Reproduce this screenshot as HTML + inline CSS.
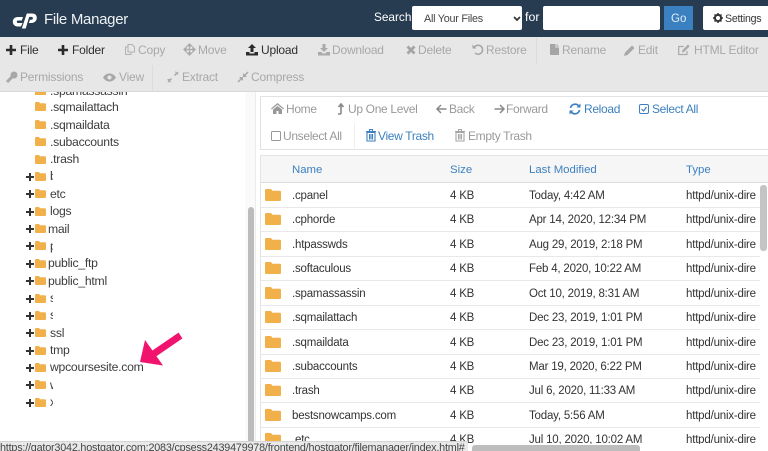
<!DOCTYPE html>
<html><head><meta charset="utf-8">
<style>
html,body{margin:0;padding:0}
body{width:768px;height:451px;overflow:hidden;background:#fff;position:relative;font-family:"Liberation Sans",sans-serif;font-size:12.5px;color:#333}
.a{position:absolute;white-space:nowrap;line-height:16px}
.b{position:absolute}
.g{color:#a8a8a8}.d{color:#2f2f2f}.l{color:#3c80bf}.h{color:#999}
.m{font-size:12px;letter-spacing:-.2px}
.n{font-size:12px;letter-spacing:-.33px}
.t{color:#3c3c3c;font-size:12.2px;letter-spacing:-.25px}
.r{color:#333;font-size:11.5px;letter-spacing:-.2px;margin-top:1px}
.c{font-size:11.4px;margin-top:1px}
.w{width:3px;overflow:hidden}
svg{position:absolute;overflow:visible}
</style></head><body>

<div class="b" style="left:0;top:0;width:768px;height:37px;background:#273b51"></div>
<div class="b" style="left:0;top:37px;width:768px;height:54px;background:#e7e7e7;border-bottom:1px solid #d8d8d8"></div>
<div class="b" style="left:152px;top:65px;width:1px;height:26px;background:#dcdcdc"></div>
<div class="b" style="left:536px;top:38px;width:1px;height:26px;background:#dcdcdc"></div>

<svg style="left:12px;top:12px" width="26" height="18" viewBox="0 0 26 18"><path d="M11 5H6C2.800 5 .8 7 .8 9.700S2.800 14.500 6 14.500h3l1.500-3.500H6.300C5.300 11 4.800 10.500 4.800 9.700S5.400 8.500 6.400 8.500h3.400z" fill="#fff"/><path d="M9.800 16.500 14.800 1.500h5.200c3 0 4.800 1.700 4.800 4.300 0 3-2.300 5.200-5.300 5.200h-2.700l1.200-3.300h1.300c1 0 1.600-.6 1.600-1.500 0-.8-.6-1.300-1.500-1.300h-2.200l-3.500 11.600z" fill="#fff"/></svg>
<div class="a" style="left:44px;top:11px;color:#eef1f4;font-size:15px;line-height:18px;letter-spacing:-.3px">File Manager</div>
<div class="a" style="left:374px;top:9px;color:#fff;font-size:11.800px">Search</div>
<div class="b" style="left:412px;top:6px;width:110px;height:24px;background:#fff;border-radius:2px"></div>
<div class="a" style="left:424px;top:11px;font-size:10.800px;letter-spacing:-.25px;color:#444">All Your Files</div>
<svg style="left:513px;top:16px" width="8" height="6"><path d="M1 1l3 3 3-3" fill="none" stroke="#333" stroke-width="1.700"/></svg>
<div class="a" style="left:525px;top:9px;color:#fff;font-size:12.400px">for</div>
<div class="b" style="left:543px;top:6px;width:117px;height:24px;background:#fff;border-radius:2px"></div>
<div class="b" style="left:664px;top:6px;width:29px;height:24px;background:#3b80c0"></div>
<div class="a" style="left:671px;top:11px;color:#e5eef7;font-size:11.500px">Go</div>
<div class="b" style="left:703px;top:6px;width:65px;height:24px;background:#fff;border-radius:2px 0 0 2px"></div>
<svg style="left:713px;top:13px" width="10" height="10" viewBox="0 0 10 10"><circle cx="5" cy="5" r="3.100" fill="none" stroke="#333" stroke-width="2"/><path d="M5 0v2M5 8v2M0 5h2M8 5h2M1.500 1.500l1.200 1.200M7.300 7.300l1.200 1.200M1.500 8.500l1.200-1.200M7.300 2.700l1.200-1.200" stroke="#333" stroke-width="1.500"/></svg>
<div class="a" style="left:725px;top:11px;font-size:10.600px;letter-spacing:-.25px;color:#333">Settings</div>

<svg style="left:6px;top:45px" width="10" height="10"><path d="M5 0v10M0 5h10" stroke="#2c2c2c" stroke-width="2.600"/></svg>
<div class="a d m" style="left:20px;top:42px">File</div>
<svg style="left:58px;top:45px" width="10" height="10"><path d="M5 0v10M0 5h10" stroke="#2c2c2c" stroke-width="2.600"/></svg>
<div class="a d m" style="left:72px;top:42px">Folder</div>
<svg style="left:125px;top:44px" width="10" height="11"><path d="M3 .5h4l2.500 2.500v5H3zM3 3H.5v7.500H6V8" fill="none" stroke="#b2b2b2"/></svg>
<div class="a g m" style="left:138px;top:42px">Copy</div>
<svg style="left:184px;top:44px" width="11" height="11"><path d="M5.500 0v11M0 5.500h11M5.500 0l-2 2h4zM5.500 11l-2-2h4zM0 5.500l2-2v4zM11 5.500l-2-2v4z" stroke="#aaa" fill="#aaa" stroke-width="1.300"/></svg>
<div class="a g m" style="left:198px;top:42px">Move</div>
<svg style="left:246px;top:44px" width="12" height="12"><path d="M6 0l4 4H7.500v4h-3V4H2z" fill="#2c2c2c"/><path d="M0 8h3.500v1.500h5V8H12v3.500H0z" fill="#2c2c2c"/></svg>
<div class="a d m" style="left:261px;top:42px">Upload</div>
<svg style="left:318px;top:44px" width="12" height="12"><path d="M4.500 0h3v4H10L6 8 2 4h2.500z" fill="#aaa"/><path d="M0 8h3.500l1 1.500h3l1-1.500H12v3.500H0z" fill="#aaa"/></svg>
<div class="a g m" style="left:332px;top:42px">Download</div>
<svg style="left:406px;top:45px" width="10" height="10"><path d="M1.500 1.500l7 7M8.500 1.500l-7 7" stroke="#a5a5a5" stroke-width="2.800"/></svg>
<div class="a g m" style="left:418px;top:42px">Delete</div>
<svg style="left:472px;top:44px" width="12" height="11" viewBox="0 0 12 11"><path d="M2.500 3A4.500 4.500 0 1 1 3 9" fill="none" stroke="#a5a5a5" stroke-width="1.500"/><path d="M.5.500v4h4z" fill="#a5a5a5"/></svg>
<div class="a g m" style="left:486px;top:42px">Restore</div>
<svg style="left:550px;top:44px" width="9" height="11"><path d="M0 0h5.500v3.500H9V11H0zM6.500 0L9 2.500H6.500z" fill="#a5a5a5"/></svg>
<div class="a g m" style="left:562px;top:42px">Rename</div>
<svg style="left:624px;top:45px" width="11" height="11"><path d="M0 11l1-3.500L8 .5l2.500 2.500-7 7z" fill="#a8a8a8"/></svg>
<div class="a g m" style="left:638px;top:42px">Edit</div>
<svg style="left:678px;top:44px" width="12" height="12"><path d="M9 7v3.500H.7V2.500h5" fill="none" stroke="#aaa" stroke-width="1.200"/><path d="M4 8.500l.5-2.500L10 .5 11.700 2.300 6.300 7.800z" fill="#aaa"/></svg>
<div class="a g m" style="left:694px;top:42px">HTML Editor</div>

<svg style="left:6px;top:71px" width="12" height="12"><circle cx="8" cy="4" r="3.500" fill="#a8a8a8"/><path d="M6 6L1 11" stroke="#a8a8a8" stroke-width="3"/></svg>
<div class="a g m" style="left:20px;top:69px">Permissions</div>
<svg style="left:103px;top:73px" width="13" height="9"><path d="M0 4.500C2 1.500 4 .5 6.500.5S11 1.500 13 4.500C11 7.500 9 8.500 6.500 8.500S2 7.500 0 4.500z" fill="#a8a8a8"/><circle cx="6.500" cy="4.500" r="2" fill="#e7e7e7"/></svg>
<div class="a g m" style="left:119px;top:69px">View</div>
<svg style="left:167px;top:71px" width="12" height="12"><path d="M1 11l3.500-3.500M7.500 4.500L11 1" stroke="#a8a8a8" stroke-width="1.500"/><path d="M0 8l4 4-1-4zM8 0l4 4-3-1z" fill="#a8a8a8"/></svg>
<div class="a g m" style="left:182px;top:69px">Extract</div>
<svg style="left:237px;top:71px" width="12" height="12"><path d="M1 11l3.500-3.500M7.500 4.500L11 1" stroke="#a8a8a8" stroke-width="1.500"/><path d="M6 6h-4l4 4zM6 6h4L6 2z" fill="#a8a8a8"/></svg>
<div class="a g m" style="left:251px;top:69px">Compress</div>

<!-- tree -->
<div class="a t" style="left:50px;top:83px;clip-path:inset(9px 0 0 0)">.spamassassin</div>
<svg style="left:35px;top:92px" width="11" height="3"><rect width="11" height="3" fill="#f2b04a"/></svg>

<svg width="0" height="0" style="position:absolute"><defs>
<symbol id="f" viewBox="0 0 11 9"><path d="M0 1.200Q0 0 1.200 0H4l1 1.300h4.800Q11 1.300 11 2.500V8Q11 9 10 9H1Q0 9 0 8z" fill="#f2b04a"/></symbol>
<symbol id="F" viewBox="0 0 16 12"><path d="M0 1Q0 0 1 0h5l1.500 1.800H15Q16 1.800 16 3v8q0 1-1 1H1q-1 0-1-1z" fill="#f2b04a"/></symbol>
<symbol id="p" viewBox="0 0 8 8"><path d="M4 0v8M0 4h8" stroke="#333" stroke-width="2"/></symbol>
</defs></svg>

<svg style="left:35px;top:102px" width="11" height="9"><use href="#f"/></svg><div class="a t" style="left:50px;top:99px">.sqmailattach</div>
<svg style="left:35px;top:120px" width="11" height="9"><use href="#f"/></svg><div class="a t" style="left:50px;top:117px">.sqmaildata</div>
<svg style="left:35px;top:137px" width="11" height="9"><use href="#f"/></svg><div class="a t" style="left:50px;top:134px">.subaccounts</div>
<svg style="left:35px;top:155px" width="11" height="9"><use href="#f"/></svg><div class="a t" style="left:50px;top:151px">.trash</div>

<svg style="left:26px;top:173px" width="8" height="8"><use href="#p"/></svg><svg style="left:35px;top:172px" width="11" height="9"><use href="#f"/></svg><div class="a t w" style="left:50px;top:168px">b</div>
<svg style="left:26px;top:190px" width="8" height="8"><use href="#p"/></svg><svg style="left:35px;top:189px" width="11" height="9"><use href="#f"/></svg><div class="a t" style="left:50px;top:186px">etc</div>
<svg style="left:26px;top:208px" width="8" height="8"><use href="#p"/></svg><svg style="left:35px;top:207px" width="11" height="9"><use href="#f"/></svg><div class="a t" style="left:50px;top:203px">logs</div>
<svg style="left:26px;top:225px" width="8" height="8"><use href="#p"/></svg><svg style="left:35px;top:224px" width="11" height="9"><use href="#f"/></svg><div class="a t" style="left:48px;top:221px">mail</div>
<svg style="left:26px;top:242px" width="8" height="8"><use href="#p"/></svg><svg style="left:35px;top:241px" width="11" height="9"><use href="#f"/></svg><div class="a t w" style="left:50px;top:238px">p</div>
<svg style="left:26px;top:260px" width="8" height="8"><use href="#p"/></svg><svg style="left:35px;top:259px" width="11" height="9"><use href="#f"/></svg><div class="a t" style="left:48px;top:255px">public_ftp</div>
<svg style="left:26px;top:277px" width="8" height="8"><use href="#p"/></svg><svg style="left:35px;top:276px" width="11" height="9"><use href="#f"/></svg><div class="a t" style="left:48px;top:273px">public_html</div>
<svg style="left:26px;top:295px" width="8" height="8"><use href="#p"/></svg><svg style="left:35px;top:294px" width="11" height="9"><use href="#f"/></svg><div class="a t w" style="left:50px;top:290px">s</div>
<svg style="left:26px;top:312px" width="8" height="8"><use href="#p"/></svg><svg style="left:35px;top:311px" width="11" height="9"><use href="#f"/></svg><div class="a t w" style="left:50px;top:307px">s</div>
<svg style="left:26px;top:329px" width="8" height="8"><use href="#p"/></svg><svg style="left:35px;top:328px" width="11" height="9"><use href="#f"/></svg><div class="a t" style="left:50px;top:325px">ssl</div>
<svg style="left:26px;top:347px" width="8" height="8"><use href="#p"/></svg><svg style="left:35px;top:346px" width="11" height="9"><use href="#f"/></svg><div class="a t" style="left:50px;top:342px">tmp</div>
<svg style="left:26px;top:364px" width="8" height="8"><use href="#p"/></svg><svg style="left:35px;top:363px" width="11" height="9"><use href="#f"/></svg><div class="a t" style="left:50px;top:359px">wpcoursesite.com</div>
<svg style="left:26px;top:381px" width="8" height="8"><use href="#p"/></svg><svg style="left:35px;top:380px" width="11" height="9"><use href="#f"/></svg><div class="a t w" style="left:50px;top:377px">w</div>
<svg style="left:26px;top:399px" width="8" height="8"><use href="#p"/></svg><svg style="left:35px;top:398px" width="11" height="9"><use href="#f"/></svg><div class="a t w" style="left:50px;top:394px">x</div>

<!-- arrow -->
<svg style="left:0;top:0" width="768" height="451" viewBox="0 0 768 451"><path d="M180.500 335.500L152 355" stroke="#f0146e" stroke-width="7"/><path d="M145 340L140 362 163 365.500z" fill="#f0146e"/></svg>

<!-- splitter / scrollbars -->
<div class="b" style="left:245px;top:92px;width:11px;height:349px;background:#fafafa;border-right:1px solid #ececec;box-sizing:border-box"></div>
<div class="b" style="left:248px;top:207px;width:6px;height:234px;background:#bcbcbc;border-radius:3px 3px 0 0"></div>

<!-- right toolbar -->
<div class="b" style="left:260px;top:96px;width:508px;height:54px;border:1px solid #e2e2e2;border-right:0;box-sizing:border-box;background:#fff"></div>
<div class="b" style="left:354px;top:123px;width:1px;height:27px;background:#eee"></div>
<svg style="left:271px;top:103px" width="13" height="11" viewBox="0 0 13 11"><path d="M6.500 0L13 5.500l-.8.900L6.500 1.800.8 6.400 0 5.500z" fill="#999"/><path d="M2 6.500L6.500 3 11 6.500V11H7.500V8h-2v3H2z" fill="#999"/></svg>
<div class="a h n" style="left:286px;top:101px">Home</div>
<svg style="left:337px;top:103px" width="7" height="12"><path d="M4 11V1.500M1.500 4L4 1l2.500 3M4 11H1" fill="none" stroke="#888" stroke-width="1.600"/></svg>
<div class="a h n" style="left:348px;top:101px">Up One Level</div>
<svg style="left:436px;top:104px" width="11" height="10"><path d="M10.500 5H1.500M5 1L1 5l4 4" fill="none" stroke="#888" stroke-width="1.500"/></svg>
<div class="a h n" style="left:449px;top:101px">Back</div>
<svg style="left:494px;top:104px" width="11" height="10"><path d="M.5 5h9M6 1l4 4-4 4" fill="none" stroke="#888" stroke-width="1.500"/></svg>
<div class="a h n" style="left:506px;top:101px">Forward</div>
<svg style="left:569px;top:103px" width="12" height="12" viewBox="0 0 12 12"><path d="M1.500 5A4.700 4.700 0 0 1 9.800 3M10.500 7A4.700 4.700 0 0 1 2.200 9" fill="none" stroke="#3c80bf" stroke-width="1.700"/><path d="M11.500.5v4h-4zM.5 11.500v-4h4z" fill="#3c80bf"/></svg>
<div class="a l n" style="left:584px;top:101px">Reload</div>
<svg style="left:639px;top:104px" width="10" height="10"><rect x=".5" y=".5" width="9" height="9" rx="1.500" fill="none" stroke="#3c80bf"/><path d="M2.500 5l2 2 3-4" fill="none" stroke="#3c80bf" stroke-width="1.200"/></svg>
<div class="a l n" style="left:652px;top:101px">Select All</div>

<svg style="left:271px;top:131px" width="10" height="10"><rect x=".5" y=".5" width="9" height="9" rx="1" fill="none" stroke="#999"/></svg>
<div class="a h n" style="left:283px;top:128px">Unselect All</div>
<svg style="left:366px;top:129px" width="10" height="12"><path d="M0 2.500h10M3.500 2V.5h3V2M1 3.500h8V12H1zM3.500 5v5.500M5 5v5.500M6.500 5v5.500" fill="none" stroke="#3c80bf" stroke-width="1.100"/></svg>
<div class="a l n" style="left:378px;top:128px">View Trash</div>
<svg style="left:455px;top:129px" width="10" height="12"><path d="M0 2.500h10M3.500 2V.5h3V2M1 3.500h8V12H1zM3.500 5v5.500M5 5v5.500M6.500 5v5.500" fill="none" stroke="#a5a5a5" stroke-width="1.100"/></svg>
<div class="a h n" style="left:468px;top:128px">Empty Trash</div>

<!-- table -->
<div class="b" style="left:260px;top:155px;width:508px;height:286px;border-left:1px solid #e4e4e4;border-top:1px solid #e4e4e4;box-sizing:border-box"></div>
<div class="b" style="left:261px;top:156px;width:507px;height:27px;background:#f6f6f6;border-bottom:1px solid #dcdcdc;box-sizing:border-box"></div>
<div class="a l c" style="left:292px;top:161px">Name</div>
<div class="a l c" style="left:450px;top:161px">Size</div>
<div class="a l c" style="left:529px;top:161px">Last Modified</div>
<div class="a l c" style="left:686px;top:161px">Type</div>

<div class="b" style="left:261px;top:207px;width:499px;height:1px;background:#e8e8e8"></div>
<div class="b" style="left:261px;top:231px;width:499px;height:1px;background:#e8e8e8"></div>
<div class="b" style="left:261px;top:256px;width:499px;height:1px;background:#e8e8e8"></div>
<div class="b" style="left:261px;top:280px;width:499px;height:1px;background:#e8e8e8"></div>
<div class="b" style="left:261px;top:305px;width:499px;height:1px;background:#e8e8e8"></div>
<div class="b" style="left:261px;top:329px;width:499px;height:1px;background:#e8e8e8"></div>
<div class="b" style="left:261px;top:354px;width:499px;height:1px;background:#e8e8e8"></div>
<div class="b" style="left:261px;top:378px;width:499px;height:1px;background:#e8e8e8"></div>
<div class="b" style="left:261px;top:402px;width:499px;height:1px;background:#e8e8e8"></div>
<div class="b" style="left:261px;top:427px;width:499px;height:1px;background:#e8e8e8"></div>

<svg style="left:265px;top:189px" width="16" height="12"><use href="#F"/></svg><div class="a r" style="left:292px;top:187px">.cpanel</div><div class="a r" style="left:450px;top:187px">4 KB</div><div class="a r" style="left:529px;top:187px">Today, 4:42 AM</div><div class="a r" style="left:686px;top:187px">httpd/unix-dire</div>
<svg style="left:265px;top:213px" width="16" height="12"><use href="#F"/></svg><div class="a r" style="left:292px;top:211px">.cphorde</div><div class="a r" style="left:450px;top:211px">4 KB</div><div class="a r" style="left:529px;top:211px">Apr 14, 2020, 12:34 PM</div><div class="a r" style="left:686px;top:211px">httpd/unix-dire</div>
<svg style="left:265px;top:238px" width="16" height="12"><use href="#F"/></svg><div class="a r" style="left:292px;top:236px">.htpasswds</div><div class="a r" style="left:450px;top:236px">4 KB</div><div class="a r" style="left:529px;top:236px">Aug 29, 2019, 2:18 PM</div><div class="a r" style="left:686px;top:236px">httpd/unix-dire</div>
<svg style="left:265px;top:262px" width="16" height="12"><use href="#F"/></svg><div class="a r" style="left:292px;top:260px">.softaculous</div><div class="a r" style="left:450px;top:260px">4 KB</div><div class="a r" style="left:529px;top:260px">Feb 4, 2020, 10:22 AM</div><div class="a r" style="left:686px;top:260px">httpd/unix-dire</div>
<svg style="left:265px;top:287px" width="16" height="12"><use href="#F"/></svg><div class="a r" style="left:292px;top:285px">.spamassassin</div><div class="a r" style="left:450px;top:285px">4 KB</div><div class="a r" style="left:529px;top:285px">Oct 10, 2019, 8:31 AM</div><div class="a r" style="left:686px;top:285px">httpd/unix-dire</div>
<svg style="left:265px;top:311px" width="16" height="12"><use href="#F"/></svg><div class="a r" style="left:292px;top:309px">.sqmailattach</div><div class="a r" style="left:450px;top:309px">4 KB</div><div class="a r" style="left:529px;top:309px">Dec 23, 2019, 1:01 PM</div><div class="a r" style="left:686px;top:309px">httpd/unix-dire</div>
<svg style="left:265px;top:336px" width="16" height="12"><use href="#F"/></svg><div class="a r" style="left:292px;top:334px">.sqmaildata</div><div class="a r" style="left:450px;top:334px">4 KB</div><div class="a r" style="left:529px;top:334px">Dec 23, 2019, 1:01 PM</div><div class="a r" style="left:686px;top:334px">httpd/unix-dire</div>
<svg style="left:265px;top:360px" width="16" height="12"><use href="#F"/></svg><div class="a r" style="left:292px;top:358px">.subaccounts</div><div class="a r" style="left:450px;top:358px">4 KB</div><div class="a r" style="left:529px;top:358px">Mar 19, 2020, 6:22 PM</div><div class="a r" style="left:686px;top:358px">httpd/unix-dire</div>
<svg style="left:265px;top:384px" width="16" height="12"><use href="#F"/></svg><div class="a r" style="left:292px;top:382px">.trash</div><div class="a r" style="left:450px;top:382px">4 KB</div><div class="a r" style="left:529px;top:382px">Jul 6, 2020, 11:33 AM</div><div class="a r" style="left:686px;top:382px">httpd/unix-dire</div>
<svg style="left:265px;top:409px" width="16" height="12"><use href="#F"/></svg><div class="a r" style="left:292px;top:407px">bestsnowcamps.com</div><div class="a r" style="left:450px;top:407px">4 KB</div><div class="a r" style="left:529px;top:407px">Today, 5:56 AM</div><div class="a r" style="left:686px;top:407px">httpd/unix-dire</div>
<svg style="left:265px;top:433px" width="16" height="12"><use href="#F"/></svg><div class="a r" style="left:292px;top:431px">.etc</div><div class="a r" style="left:450px;top:431px">4 KB</div><div class="a r" style="left:529px;top:431px">Jul 10, 2020, 10:02 AM</div><div class="a r" style="left:686px;top:431px">httpd/unix-dire</div>

<div class="b" style="left:760px;top:185px;width:7px;height:66px;background:#c4c4c4;border-radius:3px"></div>

<!-- status bar -->
<div class="b" style="left:468px;top:444px;width:300px;height:7px;background:#fff"></div>
<div class="b" style="left:472px;top:445px;width:168px;height:6px;background:#bdbdbd;border-radius:3px 3px 0 0"></div>
<div class="b" style="left:0;top:441px;width:468px;height:10px;background:#e9e9e9;border-top:1px solid #d4d4d4;box-sizing:border-box;overflow:hidden"></div>
<div class="a" style="left:0;top:442px;width:468px;height:9px;overflow:hidden;font-size:10.800px;line-height:13px;color:#444;letter-spacing:-.2px">https://gator3042.hostgator.com:2083/cpsess2439479978/frontend/hostgator/filemanager/index.html#</div>

</body></html>
